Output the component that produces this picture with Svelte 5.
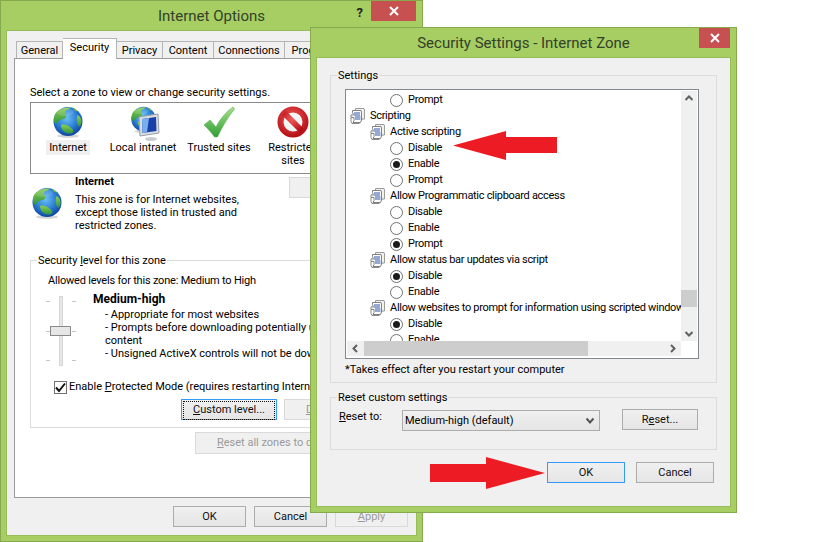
<script>
  const rows = [
    { type: 'opt', text: 'Prompt' },
    { type: 'root', text: 'Scripting' },
    { type: 'head', text: 'Active scripting' },
    { type: 'opt', text: 'Disable' },
    { type: 'opt', text: 'Enable', on: true },
    { type: 'opt', text: 'Prompt' },
    { type: 'head', text: 'Allow Programmatic clipboard access' },
    { type: 'opt', text: 'Disable' },
    { type: 'opt', text: 'Enable' },
    { type: 'opt', text: 'Prompt', on: true },
    { type: 'head', text: 'Allow status bar updates via script' },
    { type: 'opt', text: 'Disable', on: true },
    { type: 'opt', text: 'Enable' },
    { type: 'head', text: 'Allow websites to prompt for information using scripted windows' },
    { type: 'opt', text: 'Disable', on: true },
    { type: 'opt', text: 'Enable' }
  ];
  const tabs = ['General', 'Security', 'Privacy', 'Content', 'Connections', 'Programs', 'Advanced'];
  const tabWidths = [47, 54, 46, 51, 71, 62, 60];
</script>

{#snippet globe(size)}
  <svg width={size} height={size} viewBox="0 0 32 32">
    <defs>
      <radialGradient id="sea" cx="0.45" cy="0.38" r="0.65">
        <stop offset="0" stop-color="#6cc0f2" />
        <stop offset="0.55" stop-color="#2b7fd6" />
        <stop offset="1" stop-color="#0b3f9a" />
      </radialGradient>
      <linearGradient id="land" x1="0" y1="0" x2="0" y2="1">
        <stop offset="0" stop-color="#8ccf52" />
        <stop offset="1" stop-color="#2f9440" />
      </linearGradient>
    </defs>
    <ellipse cx="16" cy="30" rx="11" ry="1.8" fill="#d5d5d5" />
    <circle cx="16" cy="15.5" r="14.5" fill="url(#sea)" />
    <path d="M5 5.5 C9 2.5 14 1 19 1.5 C17 3.5 14 3.5 13 5.5 C12.5 8 15 9 14 11.5 C12 14 9 12.5 7.5 14.5 C6 16 5 17.5 3 18 C1 13 2 8.5 5 5.5 Z" fill="url(#land)" />
    <path d="M9 19 C13 17.5 18 20 21 24 C22 26 20 28 17 27.5 C13 27 9 24 9 19 Z" fill="url(#land)" />
    <path d="M25.5 9 C28 10 29.5 13 29.5 15.5 C29.5 18 28.5 20 27 21 C25 19 24 14 25.5 9 Z" fill="url(#land)" />
    <path d="M21 2 C23 2.5 25 4 26 5.5 C24 5.5 22 4.5 21 2 Z" fill="#7cc04a" />
    <ellipse cx="13" cy="6" rx="9" ry="4" fill="#fff" opacity="0.13" />
  </svg>
{/snippet}

{#snippet scriptIcon()}
  <svg class="script" width="16" height="16" viewBox="0 0 16 16">
    <path d="M5.5 .5 H14 L14.5 2 V11 H12 V12 H8 V4 H5.5 Z" fill="#f2f2f2" stroke="#9a9a9a" />
    <path d="M2.5 2.5 H11 L11.5 4 V12 L10.5 14.5 H3 L4 12.5 V9.5 H1 V7 H3.5 L2.5 4.5 Z" fill="#fff" stroke="#808080" />
    <path d="M4 5 H10 M4 7 H10 M5 9 H10.5 M5 11 H10.5" stroke="#2b55a8" stroke-width="1.1" />
    <path d="M1 10 V13.5 L2 15.5 H9.5" fill="none" stroke="#8a8a8a" />
  </svg>
{/snippet}

<div class="desktop">
  <section class="win back">
    <header class="titlebar">
      <span class="title">Internet Options</span>
      <span class="help">?</span>
      <button class="close wide" aria-label="Close">
        <svg width="10" height="10" viewBox="0 0 10 10"><path d="M1 1 L9 9 M9 1 L1 9" stroke="#fff" stroke-width="2" /></svg>
      </button>
    </header>
    <div class="body">
      <nav class="tabs">
        {#each tabs as tab, i}
          <span class="tab" class:active={tab === 'Security'} style="width: {tabWidths[i]}px">{tab}</span>
        {/each}
      </nav>
      <div class="panel">
        <p class="select-zone">Select a zone to view or change security settings.</p>
        <div class="zones">
          <div class="zone" style="width: 74px">
            {@render globe(32)}
            <span class="zone-label picked">Internet</span>
          </div>
          <div class="zone" style="width: 76px">
            <div class="intranet">
              {@render globe(27)}
              <svg class="monitor" width="22" height="30" viewBox="0 0 22 30">
                <path d="M1 4 L20 1 L21 20 L2 23 Z" fill="#d9dde2" stroke="#9aa0a8" />
                <path d="M4 6 L18 4 L18.5 18 L4.5 20 Z" fill="#1a3fa8" />
                <path d="M4 6 L11 5 L9 19.2 L4.5 20 Z" fill="#79aef0" />
                <ellipse cx="13" cy="26" rx="6" ry="2" fill="#c9cdd2" />
              </svg>
            </div>
            <span class="zone-label">Local intranet</span>
          </div>
          <div class="zone" style="width: 76px">
            <svg width="32" height="32" viewBox="0 0 32 32">
              <defs>
                <linearGradient id="tick" x1="0" y1="0" x2="0" y2="1">
                  <stop offset="0" stop-color="#a6e08a" />
                  <stop offset="1" stop-color="#2f9e35" />
                </linearGradient>
              </defs>
              <path d="M1 19 L7 14 L13 21 C17 13 23 6 30 1 L31.5 3 C25 11 19 21 14.5 31 L11.5 31 C8 26 5 23 1 19 Z" fill="url(#tick)" stroke="#5fae55" stroke-width=".6" />
            </svg>
            <span class="zone-label">Trusted sites</span>
          </div>
          <div class="zone" style="width: 72px">
            <svg width="32" height="32" viewBox="0 0 32 32">
              <defs>
                <radialGradient id="stop" cx="0.45" cy="0.35" r="0.75">
                  <stop offset="0" stop-color="#f25a5a" />
                  <stop offset="1" stop-color="#b40f14" />
                </radialGradient>
              </defs>
              <circle cx="16" cy="16" r="12.5" fill="#f4f4f4" stroke="url(#stop)" stroke-width="6" />
              <path d="M7 7 L25 25" stroke="url(#stop)" stroke-width="6" />
            </svg>
            <span class="zone-label">Restricted<br />sites</span>
          </div>
        </div>
        <div class="zone-info">
          <div class="info-globe">{@render globe(32)}</div>
          <div class="info-text">
            <strong>Internet</strong>
            <p>This zone is for Internet websites,<br />except those listed in trusted and<br />restricted zones.</p>
          </div>
          <button class="btn sites" disabled>Sites</button>
        </div>
        <fieldset class="group level">
          <legend>Security <u>l</u>evel for this zone</legend>
          <p class="allowed">Allowed levels for this zone: Medium to High</p>
          <div class="slider-row">
            <div class="slider">
              <div class="ticks"><i></i><i></i><i></i></div>
              <div class="track"><b class="thumb"></b></div>
              <div class="ticks"><i></i><i></i><i></i></div>
            </div>
            <div class="level-text">
              <strong>Medium-high</strong>
              <p>- Appropriate for most websites</p>
              <p>- Prompts before downloading potentially unsafe</p>
              <p class="wrap">content</p>
              <p>- Unsigned ActiveX controls will not be downloaded</p>
            </div>
          </div>
          <label class="protected">
            <span class="check">
              <svg width="11" height="11" viewBox="0 0 11 11"><path d="M1 5.5 L4 9 L10 1.5" fill="none" stroke="#111" stroke-width="2" /></svg>
            </span>
            <span>Enable <u>P</u>rotected Mode (requires restarting Internet Explorer)</span>
          </label>
          <div class="level-btns">
            <button class="btn focused"><span><u>C</u>ustom level...</span></button>
            <button class="btn default-level" disabled><u>D</u>efault level</button>
          </div>
        </fieldset>
        <button class="btn reset-all" disabled><u>R</u>eset all zones to default level</button>
      </div>
      <footer class="actions">
        <button class="btn act">OK</button>
        <button class="btn act">Cancel</button>
        <button class="btn act" disabled><u>A</u>pply</button>
      </footer>
    </div>
  </section>

  <section class="win front">
    <header class="titlebar">
      <span class="title">Security Settings - Internet Zone</span>
      <button class="close" aria-label="Close">
        <svg width="10" height="10" viewBox="0 0 10 10"><path d="M1 1 L9 9 M9 1 L1 9" stroke="#fff" stroke-width="2" /></svg>
      </button>
    </header>
    <div class="body front-body">
      <fieldset class="group settings">
        <legend>Settings</legend>
        <div class="listbox">
          <div class="list-top">
            <div class="rows">
              {#each rows as row}
                <div class="row {row.type}">
                  {#if row.type === 'opt'}
                    <span class="radio" class:on={row.on}></span>
                  {:else}
                    {@render scriptIcon()}
                  {/if}
                  <span class="row-text">{row.text}</span>
                </div>
              {/each}
            </div>
            <div class="vbar">
              <svg width="16" height="16" viewBox="0 0 16 16"><path d="M4.5 9 L8 5.5 L11.5 9" fill="none" stroke="#606060" stroke-width="2" /></svg>
              <b class="vthumb"></b>
              <svg width="16" height="16" viewBox="0 0 16 16"><path d="M4.5 7 L8 10.5 L11.5 7" fill="none" stroke="#606060" stroke-width="2" /></svg>
            </div>
          </div>
          <div class="hbar">
            <svg width="17" height="15" viewBox="0 0 17 15"><path d="M10 4 L6.5 7.5 L10 11" fill="none" stroke="#606060" stroke-width="2" /></svg>
            <b class="hthumb"></b>
            <svg width="17" height="15" viewBox="0 0 17 15"><path d="M7 4 L10.5 7.5 L7 11" fill="none" stroke="#606060" stroke-width="2" /></svg>
          </div>
        </div>
        <p class="note">*Takes effect after you restart your computer</p>
      </fieldset>
      <fieldset class="group reset">
        <legend>Reset custom settings</legend>
        <div class="reset-row">
          <span class="reset-label"><u>R</u>eset to:</span>
          <span class="select">
            Medium-high (default)
            <svg width="10" height="8" viewBox="0 0 10 8"><path d="M1.5 1.5 L5 5.5 L8.5 1.5" fill="none" stroke="#555" stroke-width="2" /></svg>
          </span>
          <button class="btn reset-btn">R<u>e</u>set...</button>
        </div>
      </fieldset>
      <footer class="front-actions">
        <button class="btn act2 default">OK</button>
        <button class="btn act2">Cancel</button>
      </footer>
    </div>
  </section>

  <svg class="arrow one" width="106" height="30" viewBox="0 0 106 30" aria-hidden="true">
    <path d="M0 14.5 L53 0 V6 H104 V22 H53 V29 Z" fill="#ed1c24" />
  </svg>
  <svg class="arrow two" width="116" height="34" viewBox="0 0 116 34" aria-hidden="true">
    <path d="M0 7 H56 V0 L115 16 L56 32 V25 H0 Z" fill="#ed1c24" />
  </svg>
</div>

<style>
  :global(body) {
    margin: 0;
    background: #fff;
  }
  .desktop {
    position: relative;
    width: 819px;
    height: 542px;
    overflow: hidden;
    font: 11px/16px Roboto, "Liberation Sans", sans-serif;
    color: #000;
  }
  p {
    margin: 0;
  }
  .win {
    position: absolute;
    box-sizing: border-box;
    display: flex;
    flex-direction: column;
    background: #a6ce62;
    border: 1px solid #86a84e;
    padding: 0 6px 6px;
  }
  .back {
    left: 0;
    top: 0;
    width: 423px;
    height: 542px;
  }
  .front {
    left: 310px;
    top: 27px;
    width: 427px;
    height: 486px;
  }
  .titlebar {
    position: relative;
    flex: none;
    height: 29px;
    margin-top: 1px;
    text-align: center;
    line-height: 29px;
  }
  .title {
    font-size: 15px;
    color: #33412a;
  }
  .close {
    position: absolute;
    right: 0;
    top: -1px;
    width: 31px;
    height: 20px;
    border: 0;
    padding: 0;
    background: #c75050;
    display: flex;
    align-items: center;
    justify-content: center;
  }
  .close.wide {
    width: 45px;
  }
  .help {
    position: absolute;
    right: 53px;
    top: -4px;
    font-size: 13px;
    font-weight: 700;
    color: #222;
  }
  .body {
    flex: 1;
    box-sizing: border-box;
    background: #f0f0f0;
    box-shadow: 0 0 0 1px #97bd5a;
    padding: 7px 7px 8px;
    display: flex;
    flex-direction: column;
    min-height: 0;
  }
  .tabs {
    display: flex;
    height: 20px;
    margin-left: 2px;
    align-items: flex-end;
    white-space: nowrap;
  }
  .tab {
    flex: none;
    box-sizing: border-box;
    height: 17px;
    line-height: 17px;
    text-align: center;
    background: #f0f0f0;
    border: 1px solid #b5b5b5;
    border-left: 0;
    border-bottom: 0;
    overflow: hidden;
  }
  .tab:first-child {
    border-left: 1px solid #b5b5b5;
  }
  .tab.active {
    height: 21px;
    margin-bottom: -1px;
    line-height: 17px;
    background: #fff;
    position: relative;
    z-index: 1;
  }
  .panel {
    flex: 1;
    box-sizing: border-box;
    background: #fff;
    border: 1px solid #9a9a9a;
    padding: 26px 15px 0;
    min-height: 0;
    overflow: hidden;
  }
  .select-zone {
    height: 16px;
    margin-bottom: 1px;
    white-space: nowrap;
  }
  .zones {
    box-sizing: border-box;
    display: flex;
    width: 380px;
    height: 72px;
    border: 1px solid #8a8a8a;
    padding: 3px 0 0 0;
  }
  .zone {
    flex: none;
    display: flex;
    flex-direction: column;
    align-items: center;
    text-align: center;
    line-height: 13px;
    white-space: nowrap;
  }
  .zone > svg,
  .intranet {
    height: 32px;
  }
  .zone-label {
    margin-top: 2px;
    padding: 1px 3px;
  }
  .zone-label.picked {
    background: #f0f0f0;
  }
  .intranet {
    position: relative;
    width: 33px;
  }
  .monitor {
    position: absolute;
    right: 0;
    top: 7px;
  }
  .zone-info {
    display: flex;
    height: 78px;
    padding-top: 1px;
    box-sizing: border-box;
  }
  .info-globe {
    margin: 12px 0 0 1px;
    width: 44px;
  }
  .info-text {
    width: 214px;
    line-height: 13px;
  }
  .info-text strong {
    display: block;
    margin-bottom: 5px;
  }
  .btn {
    box-sizing: border-box;
    margin: 0;
    padding: 0;
    font: inherit;
    color: #111;
    background: linear-gradient(#f0f0f0, #e5e5e5);
    border: 1px solid #acacac;
    white-space: nowrap;
  }
  .btn:disabled {
    color: #9a9a9a;
    background: #f0f0f0;
    border-color: #d9d9d9;
  }
  .sites {
    width: 75px;
    height: 21px;
    margin-top: 2px;
  }
  .group {
    box-sizing: border-box;
    margin: 0;
    border: 1px solid #dcdcdc;
    padding: 0;
    min-width: 0;
  }
  legend {
    padding: 2px 1px 0;
    line-height: 14px;
    white-space: nowrap;
  }
  .level {
    width: 380px;
    height: 176px;
    padding: 5px 0 0 17px;
  }
  .level legend {
    margin-left: -11px;
  }
  .allowed {
    height: 16px;
    white-space: nowrap;
    letter-spacing: -0.2px;
  }
  .slider-row {
    display: flex;
    margin-top: 3px;
    margin-left: -2px;
    height: 76px;
  }
  .slider {
    display: flex;
    width: 33px;
    gap: 9px;
    margin-top: 4px;
    height: 70px;
    flex: none;
  }
  .ticks {
    width: 4px;
    height: 60px;
    margin-top: 5px;
    display: flex;
    flex-direction: column;
    justify-content: space-between;
  }
  .ticks i {
    display: block;
    height: 1px;
    background: #c4c4c4;
  }
  .track {
    position: relative;
    width: 4px;
    height: 70px;
    background: #e7e7e7;
    box-shadow: inset 0 0 0 1px #d6d6d6;
  }
  .thumb {
    position: absolute;
    left: -9px;
    top: 30px;
    box-sizing: border-box;
    width: 21px;
    height: 10px;
    background: #e6e6e6;
    border: 1px solid #8a8a8a;
  }
  .level-text {
    margin-left: 14px;
    line-height: 13px;
    white-space: nowrap;
    padding-top: 1px;
  }
  .level-text strong {
    display: block;
    margin: 0 0 2px;
    font-size: 12px;
  }
  .level-text p {
    padding-left: 12px;
  }
  .protected {
    display: flex;
    align-items: center;
    gap: 2px;
    height: 16px;
    margin: 11px 0 0 6px;
    white-space: nowrap;
  }
  .check {
    flex: none;
    box-sizing: border-box;
    width: 13px;
    height: 13px;
    border: 1px solid #707070;
    background: #fff;
    display: flex;
    align-items: center;
    justify-content: center;
  }
  .level-btns {
    display: flex;
    gap: 7px;
    margin: 4px 0 0 133px;
  }
  .level-btns .btn {
    width: 96px;
    height: 21px;
    flex: none;
  }
  .level-btns .default-level {
    padding-left: 8px;
  }
  .focused {
    border-color: #3399ff;
    padding: 1px;
  }
  .focused span {
    display: block;
    height: 17px;
    line-height: 15px;
    border: 1px dotted #111;
  }
  .reset-all {
    display: block;
    width: 192px;
    height: 22px;
    margin: 4px 0 0 165px;
  }
  .actions {
    flex: none;
    display: flex;
    justify-content: flex-end;
    gap: 8px;
    height: 21px;
    margin: 8px 1px 0 0;
  }
  .act {
    width: 73px;
  }

  .front-body {
    padding: 9px 13px 0;
  }
  .settings {
    height: 316px;
    padding: 6px 17px 0 14px;
  }
  .settings legend {
    margin-left: -8px;
  }
  .listbox {
    box-sizing: border-box;
    height: 270px;
    border: 1px solid #828790;
    padding: 1px;
    background: #fff;
    display: flex;
    flex-direction: column;
  }
  .list-top {
    display: flex;
    height: 250px;
    flex: none;
  }
  .rows {
    flex: 1;
    min-width: 0;
    overflow: hidden;
    padding-top: 1px;
  }
  .row {
    display: flex;
    align-items: center;
    height: 16px;
    white-space: nowrap;
    letter-spacing: -0.3px;
  }
  .row.opt {
    padding-left: 43px;
    gap: 5px;
  }
  .row.head {
    padding-left: 23px;
    gap: 4px;
  }
  .row.root {
    padding-left: 3px;
    gap: 4px;
  }
  .script {
    flex: none;
  }
  .radio {
    flex: none;
    box-sizing: border-box;
    width: 13px;
    height: 13px;
    border: 1px solid #707070;
    border-radius: 50%;
    background: #fff;
    display: flex;
    align-items: center;
    justify-content: center;
  }
  .radio.on::after {
    content: '';
    width: 7px;
    height: 7px;
    border-radius: 50%;
    background: #1a1a1a;
  }
  .vbar {
    flex: none;
    width: 16px;
    background: #f0f0f0;
    display: flex;
    flex-direction: column;
  }
  .vbar svg:last-child {
    margin-top: auto;
  }
  .vthumb {
    display: block;
    margin-top: 183px;
    height: 17px;
    background: #cdcdcd;
  }
  .hbar {
    flex: none;
    display: flex;
    height: 15px;
    background: #f0f0f0;
    margin-right: 16px;
  }
  .hbar svg:last-child {
    margin-left: auto;
  }
  .hthumb {
    display: block;
    width: 224px;
    background: #cdcdcd;
  }
  .note {
    margin-top: 3px;
    white-space: nowrap;
  }
  .reset {
    height: 61px;
    margin-top: 6px;
    padding: 5px 0 0 8px;
  }
  .reset legend {
    margin-left: -2px;
  }
  .reset-row {
    display: flex;
    align-items: flex-start;
  }
  .reset-label {
    width: 63px;
    line-height: 14px;
  }
  .select {
    box-sizing: border-box;
    width: 198px;
    height: 21px;
    border: 1px solid #acacac;
    background: linear-gradient(#f0f0f0, #e5e5e5);
    padding: 0 4px 0 2px;
    line-height: 19px;
    display: flex;
    align-items: center;
    justify-content: space-between;
  }
  .reset-btn {
    width: 76px;
    height: 21px;
    margin: -1px 0 0 22px;
  }
  .front-actions {
    display: flex;
    justify-content: flex-end;
    gap: 11px;
    margin-top: 12px;
    padding-right: 3px;
  }
  .act2 {
    width: 78px;
    height: 21px;
  }
  .default {
    border-color: #3399ff;
  }
  .arrow {
    position: absolute;
  }
  .one {
    left: 453px;
    top: 131px;
  }
  .two {
    left: 430px;
    top: 457px;
  }
</style>
